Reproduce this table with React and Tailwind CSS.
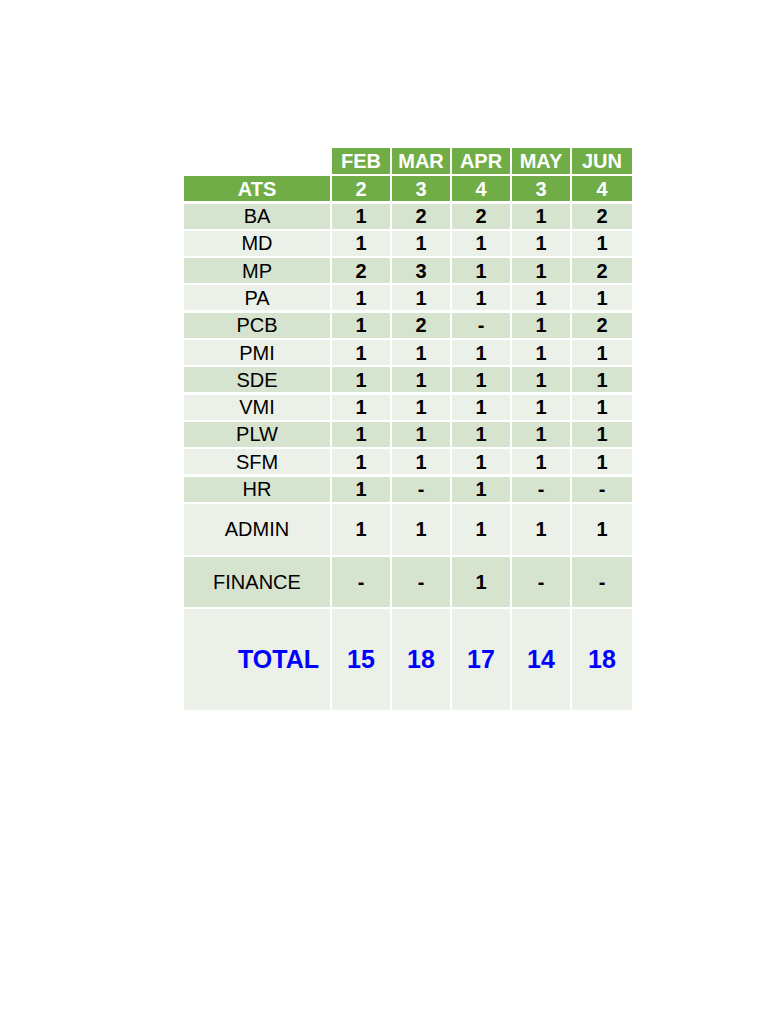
const months = ['FEB', 'MAR', 'APR', 'MAY', 'JUN']
const ats = ['2', '3', '4', '3', '4']

const rows = [
  ['BA', ['1', '2', '2', '1', '2']],
  ['MD', ['1', '1', '1', '1', '1']],
  ['MP', ['2', '3', '1', '1', '2']],
  ['PA', ['1', '1', '1', '1', '1']],
  ['PCB', ['1', '2', '-', '1', '2']],
  ['PMI', ['1', '1', '1', '1', '1']],
  ['SDE', ['1', '1', '1', '1', '1']],
  ['VMI', ['1', '1', '1', '1', '1']],
  ['PLW', ['1', '1', '1', '1', '1']],
  ['SFM', ['1', '1', '1', '1', '1']],
  ['HR', ['1', '-', '1', '-', '-']],
]

const totals = ['15', '18', '17', '14', '18']

function Row({ label, values, dark, h }) {
  const bg = dark ? 'bg-[#d6e3cf]' : 'bg-[#ebf0e8]'
  return (
    <>
      <div className={`${bg} ${h} flex items-center justify-center text-[20px] text-black`}>{label}</div>
      {values.map((v, i) => (
        <div key={i} className={`${bg} ${h} flex items-center justify-center text-[20px] font-bold text-black`}>
          {v}
        </div>
      ))}
    </>
  )
}

export default function App() {
  return (
    <div className="min-h-screen bg-white pt-[148px] pl-[184px]" style={{ fontFamily: '"Liberation Sans", Arial, sans-serif' }}>
      <div className="grid grid-cols-[146px_58px_58px_58px_58px_60px] gap-x-[2px] gap-y-[2.3px] w-max">
        <div className="h-[26px] bg-white" />
        {months.map(m => (
          <div key={m} className="h-[26px] bg-[#70ad47] flex items-center justify-center text-[20px] font-bold text-white">
            {m}
          </div>
        ))}

        <div className="h-[25px] bg-[#70ad47] flex items-center justify-center text-[20px] font-bold text-white">ATS</div>
        {ats.map((v, i) => (
          <div key={i} className="h-[25px] bg-[#70ad47] flex items-center justify-center text-[20px] font-bold text-white">
            {v}
          </div>
        ))}

        {rows.map(([label, values], i) => (
          <Row key={label} label={label} values={values} dark={i % 2 === 0} h="h-[25px]" />
        ))}

        <Row label="ADMIN" values={['1', '1', '1', '1', '1']} dark={false} h="h-[51px]" />
        <Row label="FINANCE" values={['-', '-', '1', '-', '-']} dark={true} h="h-[50px]" />

        <div className="h-[101px] bg-[#ebf0e8] flex items-center justify-end pr-[11px] text-[25px] font-bold text-[#0000ff]">
          TOTAL
        </div>
        {totals.map((v, i) => (
          <div key={i} className="h-[101px] bg-[#ebf0e8] flex items-center justify-center text-[25px] font-bold text-[#0000ff]">
            {v}
          </div>
        ))}
      </div>
    </div>
  )
}
